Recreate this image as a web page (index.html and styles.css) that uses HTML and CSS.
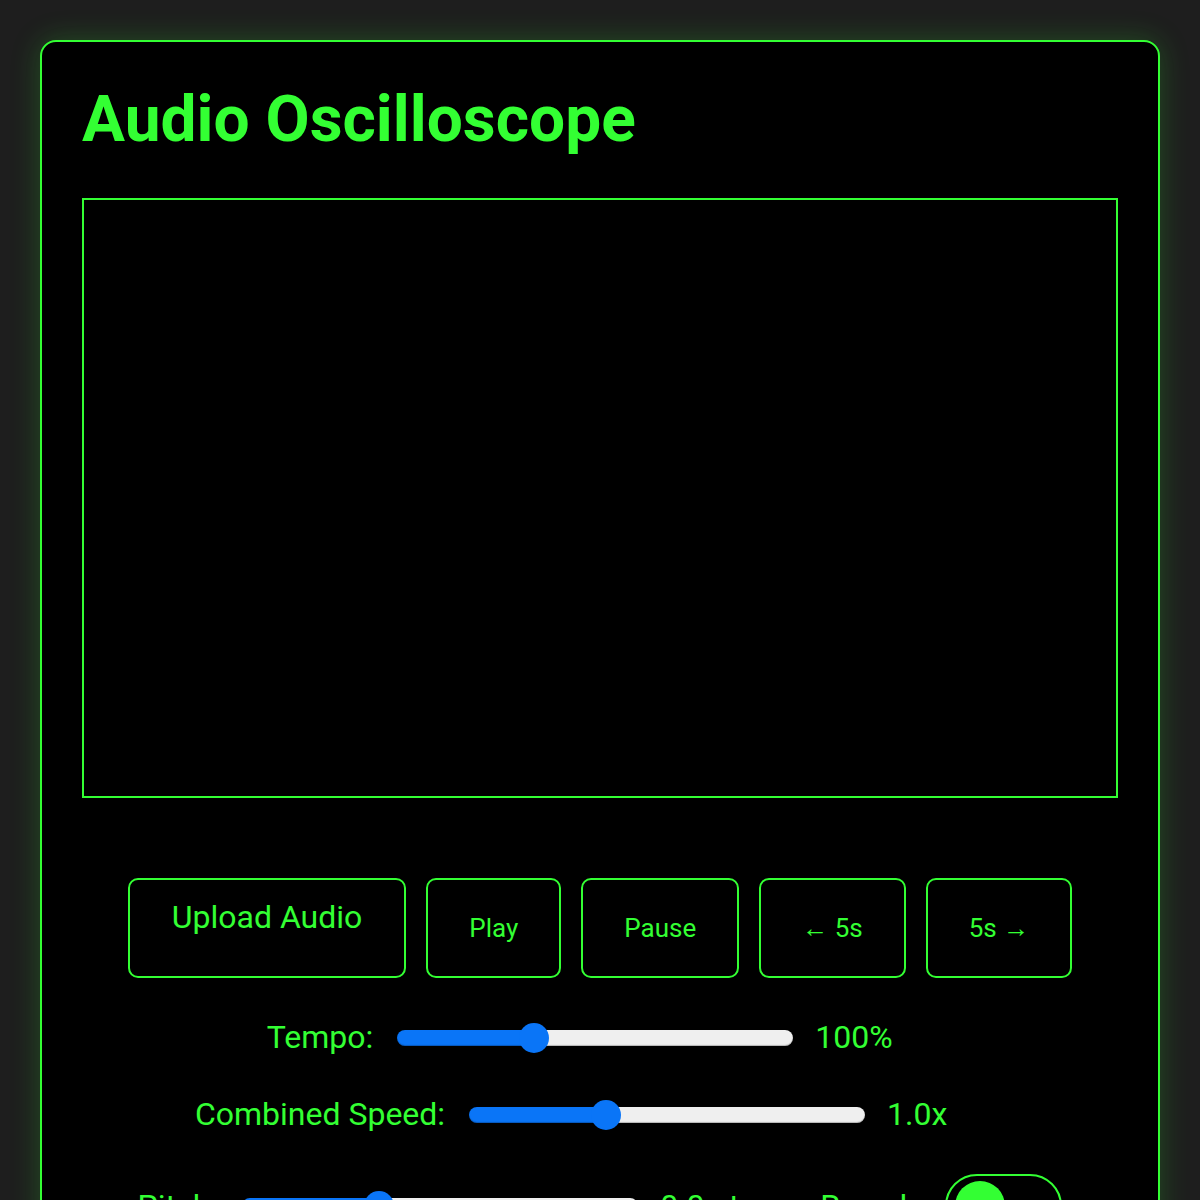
FILE: index.html
```html
<!DOCTYPE html>
<html lang="en">
<head>
<meta charset="utf-8">
<title>Audio Oscilloscope</title>
<link rel="stylesheet" href="styles.css">
</head>
<body>
<div class="container">
  <h1 class="title">Audio Oscilloscope</h1>
  <canvas class="scope" width="1032" height="596"></canvas>
  <div class="buttons">
    <label class="btn btn-upload">Upload Audio</label>
    <button class="btn">Play</button>
    <button class="btn">Pause</button>
    <button class="btn">← 5s</button>
    <button class="btn">5s →</button>
  </div>
  <div class="controls">
    <div class="row">
      <span class="label">Tempo:</span>
      <input class="slider fill-a" type="range" min="50" max="200" value="100">
      <span class="value">100%</span>
    </div>
    <div class="row">
      <span class="label">Combined Speed:</span>
      <input class="slider fill-a" type="range" min="0.5" max="2" step="0.1" value="1">
      <span class="value">1.0x</span>
    </div>
    <div class="row row-last">
      <div class="group">
        <span class="label">Pitch:</span>
        <input class="slider fill-b" type="range" min="-12" max="24" value="0">
        <span class="value value-pitch">0.0 st</span>
      </div>
      <div class="group">
        <span class="label label-reverb">Reverb:</span>
        <span class="toggle"><span class="knob"></span></span>
      </div>
    </div>
  </div>
</div>
</body>
</html>
```
FILE: styles.css
```css
html, body {
  margin: 0;
  padding: 0;
}
body {
  background: #1e1e1e;
  padding: 40px;
  font-family: Roboto, "Liberation Sans", sans-serif;
  color: #33ff33;
}
.container {
  background: #000;
  border: 2px solid #33ff33;
  border-radius: 16px;
  padding: 40px;
  box-shadow: 0 0 30px rgba(51, 255, 51, 0.22);
  min-height: 1400px;
}
.title {
  margin: 0 0 41px;
  font-size: 64px;
  font-weight: 700;
  line-height: 75px;
  color: #33ff33;
}
.scope {
  display: block;
  width: 100%;
  height: 600px;
  box-sizing: border-box;
  border: 2px solid #33ff33;
  background: #000;
}
.buttons {
  display: flex;
  justify-content: center;
  gap: 20px;
  margin-top: 80px;
}
.btn {
  box-sizing: border-box;
  height: 100px;
  padding: 0 41px;
  display: inline-flex;
  align-items: center;
  justify-content: center;
  background: #000;
  color: #33ff33;
  border: 2px solid #33ff33;
  border-radius: 10px;
  font-family: Roboto, "Liberation Sans", sans-serif;
  font-size: 26px;
  line-height: 30px;
}
.btn-upload {
  align-items: flex-start;
  padding: 19px 42px 0;
  font-size: 32px;
  line-height: 37px;
}
.controls {
  display: flex;
  flex-direction: column;
  gap: 42px;
  margin-top: 42px;
}
.row {
  display: flex;
  justify-content: center;
  align-items: center;
}
.row-last {
  gap: 45px;
}
.group {
  display: flex;
  align-items: center;
}
.label {
  font-size: 32px;
  line-height: 35px;
  margin-right: 24px;
}
.label-reverb {
  margin-right: 20px;
}
.value {
  font-size: 32px;
  line-height: 35px;
  margin-left: 22px;
  min-width: 118px;
}
.value-pitch {
  min-width: 115px;
}
.slider {
  -webkit-appearance: none;
  appearance: none;
  width: 396px;
  height: 30px;
  margin: 0;
  background: transparent;
}
.fill-a {
  --fill: 34.3%;
}
.fill-b {
  --fill: 35%;
}
.slider::-webkit-slider-runnable-track {
  height: 16px;
  border-radius: 8px;
  background: linear-gradient(to right, #0a75f7 0, #0a75f7 var(--fill), #efefef var(--fill), #efefef 100%);
  box-shadow: inset 0 -1px 1px rgba(0, 0, 0, 0.25);
}
.slider::-webkit-slider-thumb {
  -webkit-appearance: none;
  appearance: none;
  width: 30px;
  height: 30px;
  border-radius: 50%;
  background: #0a75f7;
  margin-top: -7px;
  border: none;
}
.toggle {
  box-sizing: border-box;
  width: 117px;
  height: 64px;
  border: 2px solid #33ff33;
  border-radius: 32px;
  display: flex;
  align-items: center;
  padding: 0 8px;
}
.knob {
  width: 50px;
  height: 50px;
  border-radius: 50%;
  background: #33ff33;
}
```
